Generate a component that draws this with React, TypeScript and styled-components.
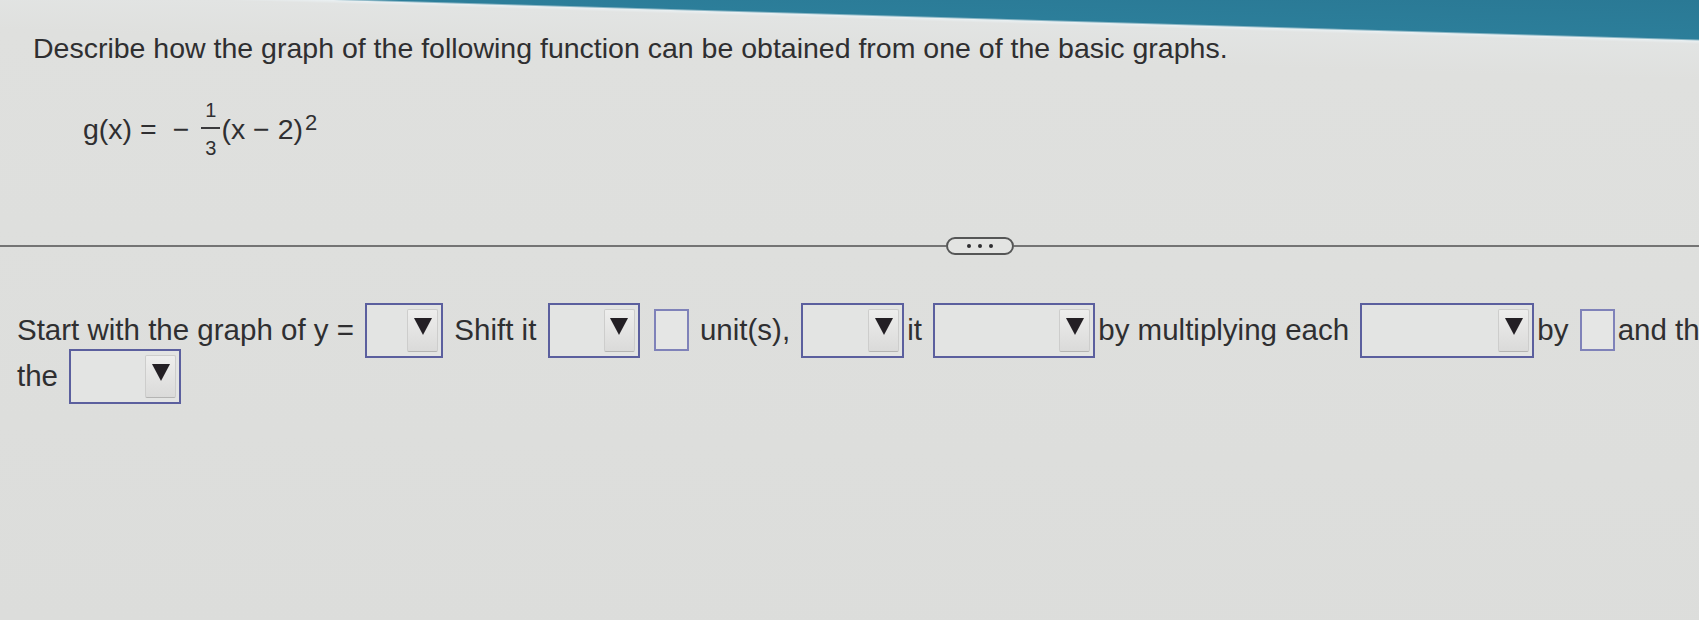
import React from 'react';
import styled, { createGlobalStyle } from 'styled-components';

const GlobalStyle = createGlobalStyle`
  html, body {
    margin: 0;
    padding: 0;
    background: #dedfdd;
  }
  body {
    font-family: "Liberation Sans", Arial, sans-serif;
    color: #2f2f31;
  }
`;

// header strip is drawn as a slanted band by the page background
const Page = styled.div`
  width: 1699px;
  height: 620px;
  overflow: hidden;
  font-size: 29.5px;
  background: linear-gradient(
    181.7deg,
    #2a7995 0,
    #2c7e9a 39px,
    #e9eff1 41px,
    #e2e4e3 44px,
    #dfe0de 80px,
    #dcdddb 100%
  );
`;

const Title = styled.h1`
  margin: 0;
  padding: 32px 0 0 33px;
  font-size: 28.5px;
  font-weight: normal;
  line-height: 32px;
`;

const Equation = styled.div`
  display: flex;
  align-items: center;
  height: 60px;
  margin-top: 35px;
  padding-left: 83px;
  font-size: 28.5px;
  line-height: 32px;
`;

const Op = styled.span`
  margin: 0 12px 0 16px;
`;

const Fraction = styled.span`
  display: inline-flex;
  flex-direction: column;
  align-items: center;
  font-size: 20px;
  line-height: 20px;
  margin-right: 1px;
`;

const Num = styled.span`
  padding: 0 4px 7px;
`;

const Bar = styled.span`
  align-self: stretch;
  height: 2px;
  background: #3a3a3c;
`;

const Den = styled.span`
  padding: 9px 4px 0;
`;

const Sup = styled.sup`
  font-size: 22px;
  line-height: 0;
  vertical-align: 9px;
  margin-left: 2px;
`;

const Divider = styled.div`
  display: grid;
  grid-template-columns: 946px auto 1fr;
  align-items: center;
  margin-top: 78px;
`;

const Rule = styled.div`
  height: 2px;
  background: #747474;
`;

const MoreButton = styled.button`
  display: flex;
  align-items: center;
  justify-content: center;
  gap: 7px;
  width: 68px;
  height: 18px;
  padding: 0;
  border: 2px solid #555656;
  border-radius: 10px;
  background: #e3e4e2;
  cursor: pointer;
`;

const Dot = styled.span`
  width: 4px;
  height: 4px;
  border-radius: 50%;
  background: #2f2f31;
`;

const Line = styled.div<{ $first?: boolean }>`
  display: flex;
  align-items: center;
  height: 46px;
  margin-top: ${p => (p.$first ? '52px' : '0')};
  padding-left: 17px;
  white-space: pre;
`;

const Select = styled.div<{ $w: number }>`
  display: flex;
  justify-content: flex-end;
  flex-shrink: 0;
  box-sizing: border-box;
  width: ${p => p.$w}px;
  height: 55px;
  margin: 0 3px;
  padding: 4px 3px;
  border: 2px solid #5b5f9e;
  background: #e3e4e3;
`;

const SelectButton = styled.div`
  display: flex;
  justify-content: center;
  box-sizing: border-box;
  width: 31px;
  padding-top: 8px;
  border: 1px solid #cdcdcc;
  border-bottom-color: #b4b4b3;
  border-radius: 2px;
  background: linear-gradient(#eeeeed, #dadad9);
`;

const Blank = styled.input`
  flex-shrink: 0;
  box-sizing: border-box;
  width: 35px;
  height: 42px;
  margin: 0 3px;
  border: 2px solid #7f82b9;
  background: #e5e6e5;
`;

const Dropdown: React.FC<{ width: number }> = ({ width }) => (
  <Select $w={width}>
    <SelectButton>
      <svg width="18" height="17" viewBox="0 0 18 17">
        <polygon points="0,0 18,0 9,17" fill="#231f24" />
      </svg>
    </SelectButton>
  </Select>
);

export default function App() {
  return (
    <Page>
      <GlobalStyle />
      <Title>Describe how the graph of the following function can be obtained from one of the basic graphs.</Title>
      <Equation>
        <span>g(x) =</span>
        <Op>−</Op>
        <Fraction>
          <Num>1</Num>
          <Bar />
          <Den>3</Den>
        </Fraction>
        <span>
          (x − 2)<Sup>2</Sup>
        </span>
      </Equation>
      <Divider>
        <Rule />
        <MoreButton aria-label="more">
          <Dot />
          <Dot />
          <Dot />
        </MoreButton>
        <Rule />
      </Divider>
      <Line $first>
        <span>Start with the graph of y = </span>
        <Dropdown width={78} />
        <span> Shift it </span>
        <Dropdown width={92} />
        <span> </span>
        <Blank />
        <span> unit(s), </span>
        <Dropdown width={103} />
        <span>it </span>
        <Dropdown width={162} />
        <span>by multiplying each </span>
        <Dropdown width={174} />
        <span>by </span>
        <Blank />
        <span>and then</span>
      </Line>
      <Line>
        <span>the </span>
        <Dropdown width={112} />
      </Line>
    </Page>
  );
}
